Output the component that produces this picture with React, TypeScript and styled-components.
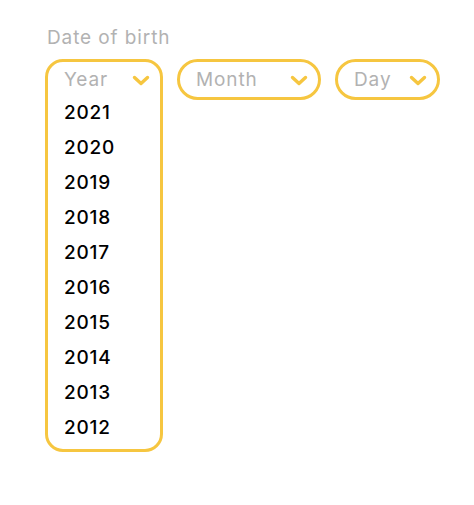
import React from 'react';
import styled, { createGlobalStyle } from 'styled-components';

const YELLOW = '#f6c640';

const GlobalStyle = createGlobalStyle`
  html, body {
    margin: 0;
    padding: 0;
    background: #fff;
  }
  body {
    font-family: Inter, "Noto Sans", sans-serif;
  }
`;

const years = [2021, 2020, 2019, 2018, 2017, 2016, 2015, 2014, 2013, 2012];

const Chevron = () => (
  <svg width="18" height="11" viewBox="0 0 18 11" fill="none">
    <path d="M2.5 2.5 L9 8.5 L15.5 2.5" stroke={YELLOW} strokeWidth="3.4" strokeLinecap="round" strokeLinejoin="round" />
  </svg>
);

interface SelectProps {
  label: string;
  width: number;
  options?: number[];
}

const Select = ({ label, width, options }: SelectProps) => {
  const open = !!options;
  return (
    <S.SelectBox $width={width} $open={open}>
      <S.SelectHead>
        <S.Placeholder>{label}</S.Placeholder>
        <Chevron />
      </S.SelectHead>
      {open && (
        <S.OptionList>
          {options!.map((o) => (
            <S.Option key={o}>{o}</S.Option>
          ))}
        </S.OptionList>
      )}
    </S.SelectBox>
  );
};

const App = () => {
  return (
    <>
      <GlobalStyle />
      <S.Page>
        <S.Label>Date of birth</S.Label>
        <S.Row>
          <Select label="Year" width={118} options={years} />
          <Select label="Month" width={144} />
          <Select label="Day" width={105} />
        </S.Row>
      </S.Page>
    </>
  );
};

export default App;

const S = {
  Page: styled.div`
    padding: 26px 0 0 45px;
    display: flex;
    flex-direction: column;
  `,
  Label: styled.div`
    color: #b2b2b2;
    font-size: 19px;
    line-height: 24px;
    margin: 0 0 9px 2px;
    letter-spacing: 0.9px;
  `,
  Row: styled.div`
    display: flex;
    align-items: flex-start;
    gap: 14px;
  `,
  SelectBox: styled.div<{ $width: number; $open: boolean }>`
    width: ${(p) => p.$width}px;
    box-sizing: border-box;
    border: 3px solid ${YELLOW};
    border-radius: ${(p) => (p.$open ? '18px' : '21px')};
    padding-bottom: ${(p) => (p.$open ? '4px' : '0')};
    display: flex;
    flex-direction: column;
  `,
  SelectHead: styled.div`
    height: 35px;
    display: flex;
    align-items: center;
    justify-content: space-between;
    padding: 0 10px 0 16px;

    svg {
      margin-top: 2px;
    }
  `,
  Placeholder: styled.span`
    color: #b2b2b2;
    font-size: 19px;
    letter-spacing: 0.9px;
  `,
  OptionList: styled.div`
    display: flex;
    flex-direction: column;
    margin-top: -2px;
  `,
  Option: styled.div`
    height: 35px;
    display: flex;
    align-items: center;
    padding-left: 16px;
    color: #000;
    font-size: 19px;
    font-weight: 500;
    letter-spacing: 0.8px;
  `
};
